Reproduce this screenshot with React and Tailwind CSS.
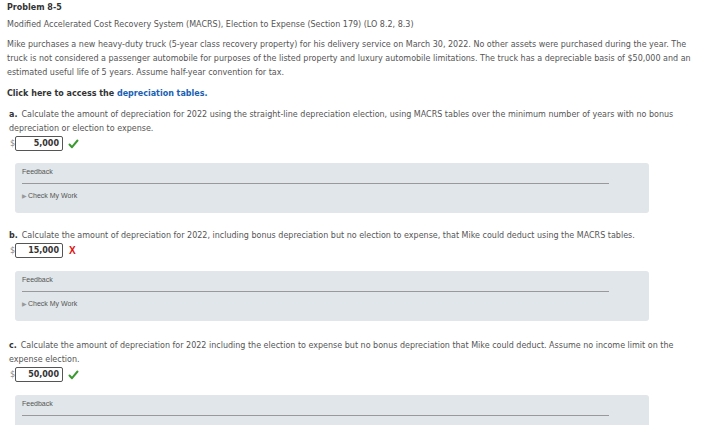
import React from 'react';

const body = { fontFamily: '"DejaVu Sans", Verdana, sans-serif' };
const arial = { fontFamily: '"Liberation Sans", Arial, sans-serif' };

function Check() {
  return (
    <svg width="11" height="10" viewBox="0 0 11 10" className="ml-[5px]">
      <path d="M1.5 5.5 L4 8.2 L9.5 1.5" fill="none" stroke="#3a9a2f" strokeWidth="2" strokeLinecap="round" strokeLinejoin="round" />
    </svg>
  );
}

function Cross() {
  return (
    <span className="ml-[6px] text-[10px] font-bold text-[#e01010] leading-none" style={arial}>X</span>
  );
}

function Answer({ value, correct }) {
  return (
    <div className="flex items-center pl-[1px] h-[15px]">
      <span className="text-[8px] text-[#888] w-[5px] leading-none">$</span>
      <div className="w-[48px] h-[15px] border border-[#555] rounded-[2px] bg-white flex items-center justify-end pr-[3px]">
        <span className="text-[8px] font-bold text-[#333]">{value}</span>
      </div>
      {correct ? <Check /> : <Cross />}
    </div>
  );
}

function Feedback({ check = true }) {
  return (
    <div className="ml-[6px] w-[634px] bg-[#e0e6e9] rounded-[3px] pl-[7px] pt-[4px] h-[50px]" style={arial}>
      <div className="text-[7px] leading-[10px] text-[#555]">Feedback</div>
      <div className="mt-[6px] mr-[40px] border-t border-[#999]"></div>
      {check && (
        <div className="mt-[7px] flex items-center text-[7px] leading-[10px] text-[#555]">
          <span className="text-[6px] text-[#999] mr-px">▶</span>
          <span>Check My Work</span>
        </div>
      )}
    </div>
  );
}

export default function App() {
  return (
    <div className="w-[710px] h-[425px] overflow-hidden bg-white text-[8px] leading-[14px] text-[#555]" style={body}>
      <div className="pl-[7px] pt-[1px]">
        <div className="font-bold text-[#333] text-[8px]">Problem 8-5</div>
        <div className="mt-[3px]">Modified Accelerated Cost Recovery System (MACRS), Election to Expense (Section 179) (LO 8.2, 8.3)</div>
        <p className="mt-[6px] pr-[10px]">
          Mike purchases a new heavy-duty truck (5-year class recovery property) for his delivery service on March 30, 2022. No other assets were purchased during the year. The truck is not considered a passenger automobile for purposes of the listed property and luxury automobile limitations. The truck has a depreciable basis of $50,000 and an estimated useful life of 5 years. Assume half-year convention for tax.
        </p>
        <div className="mt-[7px] font-bold text-[#333]">
          Click here to access the <span className="text-[#1a5fb4]">depreciation tables.</span>
        </div>
      </div>

      <div className="pl-[9px]">
        <p className="mt-[7px] pr-[20px]">
          <span className="font-bold text-[#333] mr-[4px]">a.</span>Calculate the amount of depreciation for 2022 using the straight-line depreciation election, using MACRS tables over the minimum number of years with no bonus depreciation or election to expense.
        </p>
        <Answer value="5,000" correct />
        <div className="mt-[12px]"><Feedback /></div>

        <p className="mt-[16px]">
          <span className="font-bold text-[#333] mr-[4px]">b.</span>Calculate the amount of depreciation for 2022, including bonus depreciation but no election to expense, that Mike could deduct using the MACRS tables.
        </p>
        <Answer value="15,000" correct={false} />
        <div className="mt-[13px]"><Feedback /></div>

        <p className="mt-[18px] pr-[20px]">
          <span className="font-bold text-[#333] mr-[4px]">c.</span>Calculate the amount of depreciation for 2022 including the election to expense but no bonus depreciation that Mike could deduct. Assume no income limit on the expense election.
        </p>
        <Answer value="50,000" correct />
        <div className="mt-[13px]"><Feedback check={false} /></div>
      </div>
    </div>
  );
}
